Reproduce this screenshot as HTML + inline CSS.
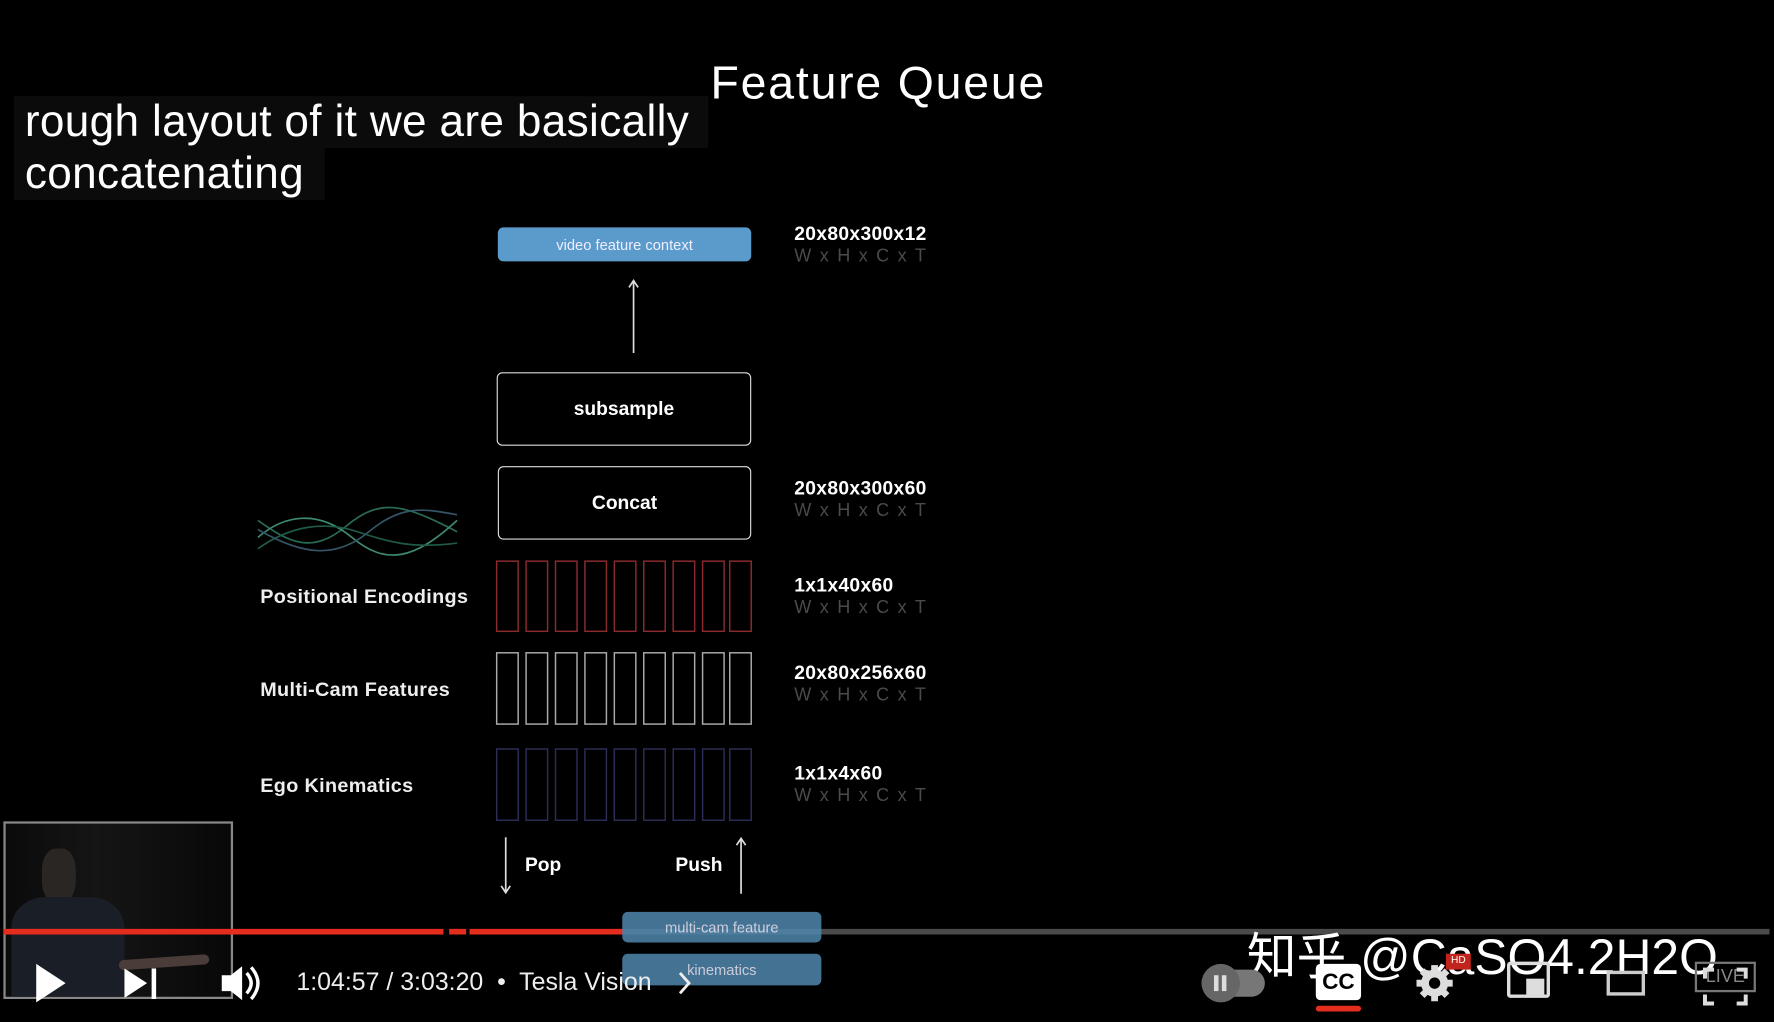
<!DOCTYPE html>
<html><head><meta charset="utf-8"><style>
html,body{margin:0;padding:0;background:#000;width:1774px;height:1022px;overflow:hidden}
#s{position:absolute;left:0;top:0;width:1568px;height:903px;transform:scale(1.13138);transform-origin:0 0;font-family:"Liberation Sans",sans-serif;color:#fff}
.a{position:absolute}
.box{position:absolute;border:1.5px solid #ddd;border-radius:5px;box-sizing:border-box;display:flex;align-items:center;justify-content:center;font-size:17px;font-weight:bold}
.lbl{position:absolute;left:230px;font-size:17.5px;font-weight:bold;color:#eee;letter-spacing:0.3px}
.dim{position:absolute;left:702px;font-size:17px;font-weight:bold;line-height:20px;letter-spacing:0.3px}
.dim span{display:block;color:#4a4a4a;font-weight:normal;letter-spacing:1.5px;font-size:16px}
.cap{position:absolute;background:#0b0b0b;font-size:39px;line-height:46px;padding:0 10px;color:#fff;letter-spacing:0.3px}
.blue{position:absolute;background:#5b9bcb;border-radius:5px;font-size:13px;display:flex;align-items:center;justify-content:center;color:#eef}
</style></head><body><div id="s">
<div class="a" style="left:628px;top:50px;font-size:41px;letter-spacing:1.6px">Feature Queue</div>
<div class="cap" style="left:12px;top:85px;width:594px">rough layout of it we are basically</div>
<div class="cap" style="left:12px;top:131px;width:255px">concatenating</div>

<div class="blue" style="left:440px;top:201px;width:224px;height:30px">video feature context</div>
<svg class="a" style="left:553px;top:246px" width="14" height="68"><path d="M7 2V66M3 8L7 2L11 8" stroke="#ddd" stroke-width="1.5" fill="none"/></svg>
<div class="box" style="left:439px;top:329px;width:225px;height:65px">subsample</div>
<div class="box" style="left:440px;top:412px;width:224px;height:65px">Concat</div>

<svg class="a" style="left:226px;top:440px" width="180" height="62"><g fill="none" stroke-width="1.5">
<path d="M2 20C30 40 50 50 80 25S130 5 178 30" stroke="#2a6a55"/>
<path d="M2 35C25 15 55 10 85 35S140 55 178 20" stroke="#3d8a70"/>
<path d="M2 45C30 25 60 20 90 30S140 45 178 40" stroke="#1f5a48"/>
<path d="M2 28C40 50 70 55 100 30S150 10 178 15" stroke="#356"/>
</g></svg>

<svg class="a" style="left:438px;top:495px" width="230" height="232">
<g fill="none" stroke-width="1.3">
<g stroke="#8a2a2e"><rect x="1" y="1" width="19" height="62"/><rect x="27" y="1" width="19" height="62"/><rect x="53" y="1" width="19" height="62"/><rect x="79" y="1" width="19" height="62"/><rect x="105" y="1" width="19" height="62"/><rect x="131" y="1" width="19" height="62"/><rect x="157" y="1" width="19" height="62"/><rect x="183" y="1" width="19" height="62"/><rect x="207" y="1" width="19" height="62"/></g>
<g stroke="#aaa"><rect x="1" y="82" width="19" height="63"/><rect x="27" y="82" width="19" height="63"/><rect x="53" y="82" width="19" height="63"/><rect x="79" y="82" width="19" height="63"/><rect x="105" y="82" width="19" height="63"/><rect x="131" y="82" width="19" height="63"/><rect x="157" y="82" width="19" height="63"/><rect x="183" y="82" width="19" height="63"/><rect x="207" y="82" width="19" height="63"/></g>
<g stroke="#2c2c58"><rect x="1" y="167" width="19" height="63"/><rect x="27" y="167" width="19" height="63"/><rect x="53" y="167" width="19" height="63"/><rect x="79" y="167" width="19" height="63"/><rect x="105" y="167" width="19" height="63"/><rect x="131" y="167" width="19" height="63"/><rect x="157" y="167" width="19" height="63"/><rect x="183" y="167" width="19" height="63"/><rect x="207" y="167" width="19" height="63"/></g>
</g></svg>

<div class="lbl" style="top:517px">Positional Encodings</div>
<div class="lbl" style="top:599px">Multi-Cam Features</div>
<div class="lbl" style="top:684px">Ego Kinematics</div>

<div class="dim" style="top:197px">20x80x300x12<span>W x H x C x T</span></div>
<div class="dim" style="top:422px">20x80x300x60<span>W x H x C x T</span></div>
<div class="dim" style="top:508px">1x1x40x60<span>W x H x C x T</span></div>
<div class="dim" style="top:585px">20x80x256x60<span>W x H x C x T</span></div>
<div class="dim" style="top:674px">1x1x4x60<span>W x H x C x T</span></div>

<svg class="a" style="left:440px;top:738px" width="14" height="54"><path d="M7 2V51M3 45L7 51L11 45" stroke="#ddd" stroke-width="1.5" fill="none"/></svg>
<div class="a" style="left:464px;top:755px;font-size:17px;font-weight:bold">Pop</div>
<div class="a" style="left:597px;top:755px;font-size:17px;font-weight:bold">Push</div>
<svg class="a" style="left:648px;top:738px" width="14" height="54"><path d="M7 52V3M3 9L7 3L11 9" stroke="#ddd" stroke-width="1.5" fill="none"/></svg>

<div class="a" style="left:3px;top:726px;width:203px;height:157px;border:2px solid #888;box-sizing:border-box;background:linear-gradient(90deg,#0a0a0a,#151515 40%,#080808);overflow:hidden">
<div class="a" style="left:32px;top:22px;width:30px;height:48px;background:#2a2624;border-radius:40%"></div>
<div class="a" style="left:5px;top:65px;width:100px;height:90px;background:#1a1e26;border-radius:30% 30% 0 0"></div>
<div class="a" style="left:100px;top:118px;width:80px;height:9px;background:#4a3c38;border-radius:5px;transform:rotate(-4deg)"></div>
</div>

<div class="a" style="left:3px;top:821px;width:389px;height:5px;background:#e52d1e"></div>
<div class="a" style="left:397px;top:821px;width:15px;height:5px;background:#e52d1e"></div>
<div class="a" style="left:415px;top:821px;width:136px;height:5px;background:#e52d1e"></div>
<div class="a" style="left:551px;top:821px;width:1013px;height:5px;background:#4a4a4a"></div>

<div class="blue" style="left:550px;top:806px;width:176px;height:27px;background:#4f86ad;opacity:.85">multi-cam feature</div>
<div class="blue" style="left:550px;top:843px;width:176px;height:28px;background:#4f86ad;opacity:.85">kinematics</div>

<svg class="a" style="left:28px;top:850px" width="220" height="40"><g fill="#fff">
<path d="M4 2L30 19L4 36Z"/><path d="M82 6L102 19L82 32Z"/><rect x="106" y="6" width="4" height="27"/>
<path d="M168 12H176L186 4V34L176 26H168Z"/></g>
<path d="M190 10Q198 19 190 28M194 5Q206 19 194 33" stroke="#fff" stroke-width="3" fill="none"/></svg>
<div class="a" style="left:262px;top:855px;font-size:22px;color:#eee">1:04:57 / 3:03:20 &nbsp;•&nbsp; Tesla Vision</div>
<svg class="a" style="left:598px;top:858px" width="14" height="22"><path d="M3 2L11 11L3 20" stroke="#eee" stroke-width="2.5" fill="none"/></svg>

<div class="a" style="left:1102px;top:810px;font-size:44px;font-family:'Liberation Sans','Noto Sans CJK SC',sans-serif">知乎 @CaSO4.2H2O</div>

<div class="a" style="left:1062px;top:857px;width:56px;height:24px;border-radius:12px;background:#777"></div>
<div class="a" style="left:1062px;top:852px;width:34px;height:34px;border-radius:50%;background:#666"></div>
<div class="a" style="left:1073px;top:862px;width:4px;height:14px;background:#ddd"></div><div class="a" style="left:1080px;top:862px;width:4px;height:14px;background:#ddd"></div>
<div class="a" style="left:1163px;top:852px;width:40px;height:32px;background:#fff;border-radius:4px;color:#000;font-weight:bold;font-size:20px;text-align:center;line-height:32px">CC</div>
<div class="a" style="left:1163px;top:889px;width:40px;height:5px;background:#e52d1e;border-radius:3px"></div>
<svg class="a" style="left:1248px;top:849px" width="40" height="40"><g fill="#ddd"><circle cx="20" cy="20" r="12"/><g stroke="#ddd" stroke-width="6"><path d="M20 4V36M4 20H36M9 9L31 31M31 9L9 31"/></g></g><circle cx="20" cy="20" r="5" fill="#000"/></svg>
<div class="a" style="left:1278px;top:843px;width:22px;height:14px;background:#c0241c;font-size:9px;text-align:center">HD</div>
<div class="a" style="left:1332px;top:850px;width:38px;height:32px;border:3px solid #ddd;border-radius:3px;box-sizing:border-box"><div class="a" style="left:14px;top:12px;width:16px;height:14px;background:#ddd"></div></div>
<div class="a" style="left:1420px;top:858px;width:34px;height:22px;border:3px solid #ccc;box-sizing:border-box"></div>
<div class="a" style="left:1498px;top:850px;width:54px;height:27px;border:2px solid #777;color:#888;font-size:16px;text-align:center;line-height:24px;box-sizing:border-box">LIVE</div>
<svg class="a" style="left:1505px;top:855px" width="40" height="34"><path d="M2 10V2H10M30 2H38V10M2 24V32H10M30 32H38V24" stroke="#ddd" stroke-width="3.5" fill="none"/></svg>
</div></body></html>
